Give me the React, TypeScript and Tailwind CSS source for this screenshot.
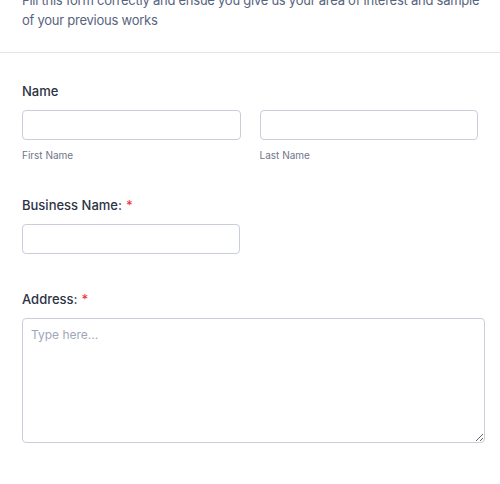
import React from 'react';

function Label({ text, required }: { text: string; required?: boolean }) {
  return (
    <div className="text-[13px] leading-[20px] font-medium text-[#2c3345]">
      {text}
      {required && <span className="ml-[4px] text-[#f23a3c]">*</span>}
    </div>
  );
}

function Field({ className = '' }: { className?: string }) {
  return (
    <input
      type="text"
      className={`h-[30px] rounded-[4px] border border-[#c8ceda] bg-white px-2 text-[13px] outline-none ${className}`}
    />
  );
}

export default function App() {
  return (
    <div className="min-h-[484px] overflow-hidden bg-white font-['Inter',sans-serif]">
      <div className="-mt-[10px] pl-[22px] pr-[12px] pb-[22px]">
        <p className="text-[13px] leading-[20px] tracking-[-0.25px] text-[#57647e]">
          Fill this form correctly and ensue you give us your area of interest and sample of your previous works
        </p>
      </div>
      <div className="border-t border-[#e3e5ec]" />
      <div className="px-[22px] pt-[28px]">
        <Label text="Name" />
        <div className="mt-[9px] flex gap-[19px]">
          <div className="flex w-[219px] flex-col">
            <Field className="w-full" />
            <span className="mt-[7px] text-[10px] leading-[16px] text-[#6f768a]">First Name</span>
          </div>
          <div className="flex w-[219px] flex-col">
            <Field className="w-full" />
            <span className="mt-[7px] text-[10px] leading-[16px] text-[#6f768a]">Last Name</span>
          </div>
        </div>

        <div className="mt-[32px]">
          <Label text="Business Name:" required />
          <Field className="mt-[9px] w-[218px]" />
        </div>

        <div className="mt-[35px]">
          <Label text="Address:" required />
          <textarea
            placeholder="Type here..."
            className="mt-[9px] block h-[125px] w-[463px] rounded-[4px] border border-[#c8ceda] px-[8px] py-[6px] text-[12px] leading-[20px] text-[#2c3345] outline-none placeholder:text-[#a0a6b8]"
          />
        </div>

        <div className="mt-[37px]">
          <Label text="City:" required />
        </div>
      </div>
    </div>
  );
}
